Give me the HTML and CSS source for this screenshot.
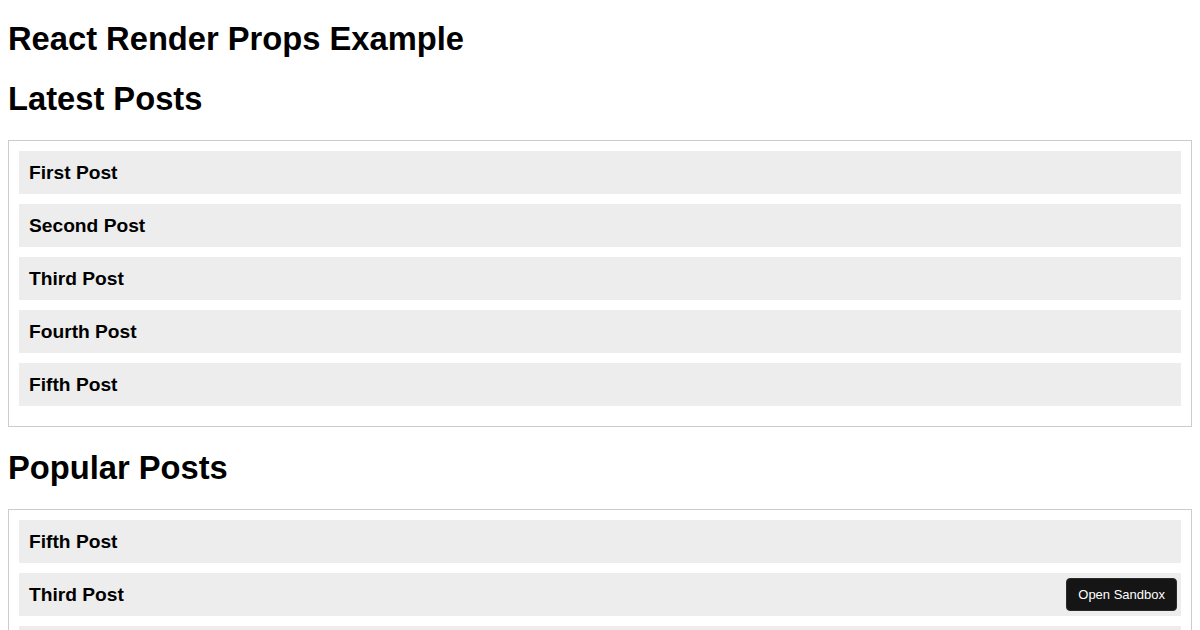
FILE: index.html
```html
<!DOCTYPE html>
<html>
<head>
<meta charset="utf-8">
<title>React Render Props Example</title>
<link rel="stylesheet" href="styles.css">
</head>
<body>
<div class="app">
  <h1 class="title">React Render Props Example</h1>
  <h2 class="section-title">Latest Posts</h2>
  <div class="post-list">
    <div class="post">First Post</div>
    <div class="post">Second Post</div>
    <div class="post">Third Post</div>
    <div class="post">Fourth Post</div>
    <div class="post">Fifth Post</div>
  </div>
  <h2 class="section-title">Popular Posts</h2>
  <div class="post-list">
    <div class="post">Fifth Post</div>
    <div class="post">Third Post</div>
    <div class="post">First Post</div>
    <div class="post">Second Post</div>
    <div class="post">Fourth Post</div>
  </div>
</div>
<a class="sandbox-btn" href="#">Open Sandbox</a>
</body>
</html>
```

FILE: styles.css
```css
html, body {
  background: #fff;
}
body {
  margin: 0;
  padding: 0 8px 8px 8px;
  font-family: "Liberation Sans", Arial, Helvetica, sans-serif;
  color: #000;
}
.app {
  display: flow-root;
}
.title,
.section-title {
  font-size: 32.7px;
  line-height: 38px;
  font-weight: bold;
  margin: 22px 0;
}
.title {
  margin-top: 20px;
}
.post-list {
  border: 1px solid #ccc;
  padding: 10px;
}
.post {
  background: #ededed;
  padding: 10px;
  margin-bottom: 10px;
  font-size: 19.2px;
  font-weight: bold;
  line-height: 23px;
}
.post:last-child {
  margin-bottom: 10px;
}
.sandbox-btn {
  position: fixed;
  right: 23px;
  bottom: 19px;
  background: #151515;
  color: #fff;
  text-decoration: none;
  font-family: "Liberation Sans", Arial, sans-serif;
  font-size: 13px;
  line-height: 15px;
  padding: 8px 11px;
  border-radius: 4px;
  border: 1px solid #2a2a2a;
}
```
